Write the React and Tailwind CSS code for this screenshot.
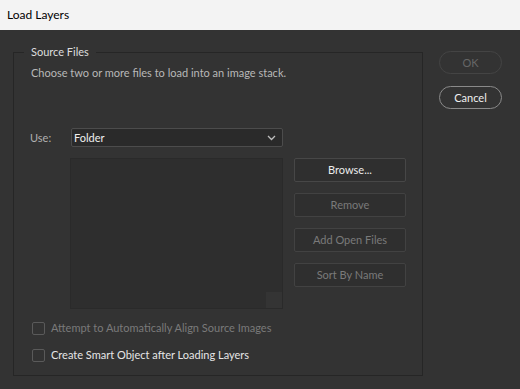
import React from 'react';

function ActionButton({ children, disabled }) {
    return (
        <button
            className={
                disabled
                    ? 'h-[24px] w-[112px] rounded-[2px] border border-[#424242] bg-[#2f2f2f] text-[11px] text-[#7a7a7a]'
                    : 'h-[24px] w-[112px] rounded-[2px] border border-[#474747] bg-[#2f2f2f] text-[11px] text-[#ececec]'
            }
        >
            {children}
        </button>
    );
}

function Check({ label, disabled }) {
    return (
        <label className="flex items-center gap-[6px] h-[16px]">
            <span className="w-[13px] h-[13px] rounded-[2px] border border-[#5a5a5a] bg-[#333333]"></span>
            <span className={disabled ? 'text-[#7a7a7a]' : 'text-[#e6e6e6]'}>{label}</span>
        </label>
    );
}

export default function App() {
    return (
        <div className="w-[520px] h-[389px] bg-[#333333] text-[11px] leading-[16px] overflow-hidden" style={{ fontFamily: 'Lato, "Noto Sans", sans-serif' }}>
            {/* Title bar */}
            <div className="h-[30px] bg-[#f3f3f3] flex items-center pl-[7px] text-black text-[12px]">
                Load Layers
            </div>

            <div className="flex pl-[13px]">
                {/* Source files group */}
                <fieldset className="mt-[14px] w-[410px] h-[332px] border border-[#262626] pl-[17px]">
                    <legend className="ml-[-7px] px-[7px] text-[#dedede]">Source Files</legend>

                    <p className="mt-[5px] text-[#b8b8b8]">Choose two or more files to load into an image stack.</p>

                    <div className="mt-[47px] flex items-center ml-[-1px]">
                        <span className="w-[41px] text-[#b0b0b0]">Use:</span>
                        <div className="w-[212px] h-[19px] rounded-[2px] border border-[#4c4c4c] bg-[#2a2a2a] flex items-center justify-between pl-[2px] pr-[6px] text-[#efefef]">
                            <span>Folder</span>
                            <svg width="9" height="6" viewBox="0 0 9 6" fill="none">
                                <path d="M1 1l3.5 3.5L8 1" stroke="#bdbdbd" strokeWidth="1.3" />
                            </svg>
                        </div>
                    </div>

                    <div className="mt-[11px] flex ml-[39px] gap-[11px]">
                        <div className="w-[213px] h-[151px] border border-[#2a2a2a] bg-[#2e2e2e] flex flex-col justify-end items-end">
                            <div className="w-[16px] h-[16px] bg-[#343434]"></div>
                        </div>
                        <div className="flex flex-col gap-[11px]">
                            <ActionButton>Browse...</ActionButton>
                            <ActionButton disabled>Remove</ActionButton>
                            <ActionButton disabled>Add Open Files</ActionButton>
                            <ActionButton disabled>Sort By Name</ActionButton>
                        </div>
                    </div>

                    <div className="mt-[11px] ml-[1px] flex flex-col gap-[11px]">
                        <Check label="Attempt to Automatically Align Source Images" disabled />
                        <Check label="Create Smart Object after Loading Layers" />
                    </div>
                </fieldset>

                {/* Dialog buttons */}
                <div className="ml-[16px] mt-[21px] flex flex-col gap-[12px]">
                    <button className="w-[63px] h-[23px] rounded-full border border-[#444444] text-[11px] text-[#666666]">OK</button>
                    <button className="w-[63px] h-[23px] rounded-full border border-[#8a8a8a] text-[11px] text-[#f0f0f0]">Cancel</button>
                </div>
            </div>
        </div>
    );
}
